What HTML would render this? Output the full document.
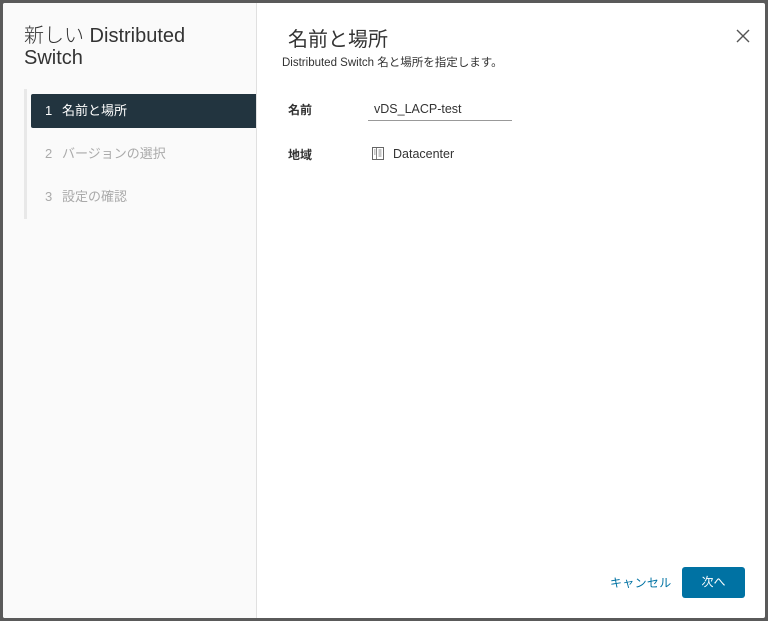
<!DOCTYPE html>
<html><head><meta charset="utf-8"><style>
*{margin:0;padding:0;box-sizing:border-box}
body{width:768px;height:621px;background:#5a5a5a;font-family:"Liberation Sans","Noto Sans CJK JP",sans-serif;position:relative;overflow:hidden}
.modal{position:absolute;left:3px;top:3px;width:762px;height:615px;background:#fff;border-radius:2px;overflow:hidden}
.left{position:absolute;left:0;top:0;width:254px;height:100%;background:#fafafa;border-right:1px solid #e0e0e0}
.title{position:absolute;left:21px;top:22px;font-size:20px;line-height:22px;color:#333;font-weight:300}
.steps{position:absolute;left:21px;top:86px;width:233px;height:130px;border-left:3px solid #e8e8e8}
.step{position:absolute;left:4px;width:225px;height:34px;font-size:13px;line-height:34px;padding-left:14px;color:#aaa}
.step.a{background:#22343f;color:#fff;border-radius:2px 0 0 2px}
.step span{display:inline-block;width:17px}
.h{position:absolute;left:285px;top:20px;font-size:20px;color:#333}
.sub{position:absolute;left:279px;top:51px;font-size:11.5px;color:#333}
.lab{position:absolute;left:285px;font-size:12px;color:#333;font-weight:bold}
.val{position:absolute;font-size:12.5px;color:#333}
.inp{position:absolute;left:365px;top:99px;width:144px;height:19px;border-bottom:1px solid #999}
.x{position:absolute;left:733px;top:26px}
.cancel{position:absolute;left:607px;top:571px;font-size:12px;color:#0072a3;letter-spacing:0.3px}
.next{position:absolute;left:679px;top:564px;width:63px;height:31px;background:#0072a3;border-radius:3px;color:#fff;font-size:12px;text-align:center;line-height:31px}
</style></head><body>
<div class="modal">
<div class="left">
<div class="title">新しい Distributed<br>Switch</div>
<div class="steps">
<div class="step a" style="top:5px"><span>1</span>名前と場所</div>
<div class="step" style="top:48px"><span>2</span>バージョンの選択</div>
<div class="step" style="top:91px"><span>3</span>設定の確認</div>
</div>
</div>
<div class="h">名前と場所</div>
<svg class="x" width="14" height="14" viewBox="0 0 14 14"><path d="M1 1L13 13M13 1L1 13" stroke="#555" stroke-width="1.4"/></svg>
<div class="sub">Distributed Switch 名と場所を指定します。</div>
<div class="lab" style="top:98px">名前</div>
<div class="inp"></div>
<div class="val" style="left:371px;top:99px">vDS_LACP-test</div>
<div class="lab" style="top:143px">地域</div>
<svg style="position:absolute;left:369px;top:144px" width="12" height="13" viewBox="0 0 12 13"><rect x="0.5" y="0.5" width="11" height="12" fill="none" stroke="#666"/><path d="M4.5 1v11M2 3h1.5M2 5h1.5M2 7h1.5M6.5 3h3M6.5 5h3M6.5 7h3M6.5 9h3" stroke="#666" stroke-width="0.8"/></svg>
<div class="val" style="left:390px;top:144px">Datacenter</div>
<div class="cancel">キャンセル</div>
<div class="next">次へ</div>
</div>
</body></html>
